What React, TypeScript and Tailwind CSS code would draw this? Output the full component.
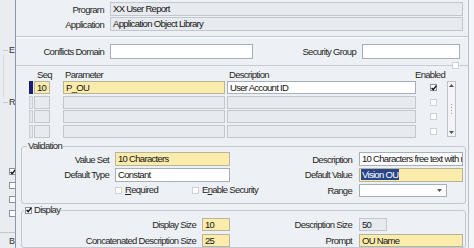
import clsx from "clsx";
import { ReactNode } from "react";

type Tone = "white" | "yellow" | "gray";

const toneClass: Record<Tone, string> = {
  white: "bg-white border-[#a7aebb]",
  yellow: "bg-[#fcecac] border-[#b9b39a]",
  gray: "bg-[#e7eaef] border-[#c1c6cf]",
};

function Field({
  children,
  tone = "white",
  className,
}: {
  children?: ReactNode;
  tone?: Tone;
  className?: string;
}) {
  return (
    <div
      className={clsx(
        "shrink-0 overflow-hidden whitespace-nowrap border px-[2px] leading-[11px] text-[#141414]",
        toneClass[tone],
        className
      )}
    >
      {children}
    </div>
  );
}

function Label({ children, className }: { children?: ReactNode; className?: string }) {
  return (
    <div className={clsx("shrink-0 whitespace-nowrap text-right leading-[13px] text-[#262626]", className)}>
      {children}
    </div>
  );
}

function Check({ checked, dim }: { checked?: boolean; dim?: boolean }) {
  return (
    <span
      className={clsx(
        "flex h-[7px] w-[7px] shrink-0 items-center justify-center border bg-white",
        dim ? "border-[#cdd1d8]" : "border-[#8d939d]"
      )}
    >
      {checked && (
        <svg viewBox="0 0 6 6" className="h-[6px] w-[6px] overflow-visible">
          <path d="M0.6 2.9 L2.2 4.6 L5.4 0.6" stroke="#111" strokeWidth="1.4" fill="none" />
        </svg>
      )}
    </span>
  );
}

function LeftStrip() {
  return (
    <div className="flex w-[15px] shrink-0 flex-col overflow-hidden bg-[#e9ecf1] text-[9px] text-[#333]">
      <div className="mt-[45px] flex h-[10px] items-center">
        <div className="ml-[3px] h-px w-[5px] shrink-0 bg-[#c3c8d0]" />
        <span className="ml-[1px] leading-[10px]">E</span>
      </div>
      <div className="ml-[3px] h-[42px] w-px bg-[#d6dae0]" />
      <div className="flex h-[10px] items-center">
        <div className="ml-[3px] h-px w-[5px] shrink-0 bg-[#c3c8d0]" />
        <span className="ml-[1px] leading-[10px]">R</span>
      </div>
      <div className="flex">
        <div className="ml-[3px] h-[125px] w-px bg-[#d6dae0]" />
        <div className="ml-[6px] mt-[61px] flex flex-col gap-[7px]">
          <Check checked />
          <Check />
          <Check />
          <Check />
        </div>
      </div>
      <div className="flex h-[16px] items-center border-t border-[#c3c8d0] pl-[9px]">
        <span className="leading-[10px]">B</span>
      </div>
    </div>
  );
}

function RowCells({ first }: { first?: boolean }) {
  return (
    <div className="flex h-[13px] items-stretch">
      <div
        className={clsx(
          "w-[4px] shrink-0",
          first ? "bg-[#1b1b78]" : "border border-[#c9cdd4] bg-[#e4e7ec]"
        )}
      />
      <Field tone={first ? "yellow" : "gray"} className="ml-[1px] w-[16px]">
        {first ? "10" : ""}
      </Field>
      <Field tone={first ? "yellow" : "gray"} className="ml-[13px] w-[162px]">
        {first ? "P_OU" : ""}
      </Field>
      <Field tone={first ? "white" : "gray"} className="ml-[2px] w-[189px]">
        {first ? "User Account ID" : ""}
      </Field>
      <div className="ml-[14px] flex items-center">
        <Check checked={first} dim={!first} />
      </div>
    </div>
  );
}

function Scrollbar() {
  return (
    <div className="ml-[10px] flex h-[56px] w-[9px] flex-col items-center justify-between border border-[#bcc1ca] bg-[#f3f4f7] py-[2px]">
      <svg viewBox="0 0 5 3" className="h-[3px] w-[5px]">
        <path d="M0 3 L2.5 0 L5 3 Z" fill="#555" />
      </svg>
      <div className="flex flex-col gap-[2px]">
        <span className="h-px w-px bg-[#9aa0aa]" />
        <span className="h-px w-px bg-[#9aa0aa]" />
        <span className="h-px w-px bg-[#9aa0aa]" />
        <span className="h-px w-px bg-[#9aa0aa]" />
      </div>
      <svg viewBox="0 0 5 3" className="h-[3px] w-[5px]">
        <path d="M0 0 L2.5 3 L5 0 Z" fill="#555" />
      </svg>
    </div>
  );
}

export default function App() {
  return (
    <div className="flex h-[248px] w-[474px] overflow-hidden bg-[#edf0f4] font-['Liberation_Sans',Arial,sans-serif] text-[9.5px] tracking-[-0.7px] text-[#262626]">
      <LeftStrip />
      <div className="w-px shrink-0 bg-[#8f98a6]" />

      <main className="flex w-[452px] shrink-0 flex-col">
        {/* Program / Application */}
        <div className="flex h-[37px] flex-col gap-[1px] pt-[2px]">
          <div className="flex h-[14px] items-center">
            <Label className="w-[88px]">Program</Label>
            <Field tone="gray" className="ml-[6px] h-[14px] w-[353px] leading-[12px]">
              XX User Report
            </Field>
          </div>
          <div className="flex h-[14px] items-center">
            <Label className="w-[88px]">Application</Label>
            <Field tone="gray" className="ml-[6px] h-[14px] w-[353px] leading-[12px]">
              Application Object Library
            </Field>
          </div>
        </div>
        <div className="border-t border-b border-t-[#c3c8d0] border-b-[#fafbfc]" />

        {/* Conflicts Domain / Security Group */}
        <div className="flex h-[24px] items-start pt-[6px]">
          <Label className="w-[88px] leading-[15px]">Conflicts Domain</Label>
          <Field className="ml-[6px] h-[15px] w-[143px]" />
          <Label className="w-[103px] leading-[15px]">Security Group</Label>
          <Field className="ml-[6px] h-[15px] w-[98px]" />
        </div>
        <div className="flex h-[7px] items-center">
          <div className="h-px flex-1 bg-[#c7ccd4]" />
          <Check dim />
          <div className="h-px w-[9px] bg-[#c7ccd4]" />
        </div>

        {/* Parameter block */}
        <div className="flex h-[12px] items-center pl-[18px] leading-[12px] text-[#262626]">
          <div className="w-[16px] shrink-0 pl-[3px]">Seq</div>
          <div className="ml-[13px] w-[162px] shrink-0 pl-[2px]">Parameter</div>
          <div className="ml-[2px] w-[188px] shrink-0 pl-[2px]">Description</div>
          <div className="whitespace-nowrap">Enabled</div>
        </div>
        <div className="flex pl-[13px]">
          <div className="flex flex-col gap-[1.5px]">
            <RowCells first />
            <RowCells />
            <RowCells />
            <RowCells />
          </div>
          <Scrollbar />
        </div>

        {/* Validation */}
        <fieldset className="mt-[2.5px] ml-[5px] mr-[2px] rounded-[3px] border border-[#c3c8d0] pb-[6px]">
          <legend className="ml-[5px] px-[1px] leading-[12px] text-[#262626]">Validation</legend>
          <div className="flex flex-col gap-[1.5px]">
            <div className="flex h-[14px] items-center">
              <Label className="w-[87px]">Value Set</Label>
              <Field tone="yellow" className="ml-[6px] h-[14px] w-[115px] leading-[12px]">
                10 Characters
              </Field>
              <Label className="w-[122px]">Description</Label>
              <Field className="ml-[7px] h-[14px] w-[104px] leading-[12px]">
                10 Characters free text with r
              </Field>
            </div>
            <div className="flex h-[14px] items-center">
              <Label className="w-[87px]">Default Type</Label>
              <Field className="ml-[6px] h-[14px] w-[115px] leading-[12px]">Constant</Field>
              <Label className="w-[122px]">Default Value</Label>
              <Field tone="yellow" className="ml-[7px] h-[14px] w-[104px] pl-[1px] leading-[12px]">
                <span className="bg-[#28468a] px-[1px] text-white">Vision OU</span>
              </Field>
            </div>
            <div className="flex h-[14px] items-center">
              <Label className="w-[87px]" />
              <div className="ml-[6px] flex w-[115px] shrink-0 items-center whitespace-nowrap text-[#262626]">
                <div className="flex w-[77px] shrink-0 items-center gap-[3px]">
                  <Check dim />
                  <span>
                    <span className="underline">R</span>equired
                  </span>
                </div>
                <div className="flex shrink-0 items-center gap-[3px]">
                  <Check dim />
                  <span>
                    E<span className="underline">n</span>able Security
                  </span>
                </div>
              </div>
              <Label className="w-[122px]">Range</Label>
              <Field className="relative ml-[7px] h-[13px] w-[88px]">
                <svg
                  viewBox="0 0 5 3"
                  className="absolute right-[4px] top-[4px] h-[3px] w-[5px]"
                >
                  <path d="M0 0 L2.5 3 L5 0 Z" fill="#555" />
                </svg>
              </Field>
            </div>
          </div>
        </fieldset>

        {/* Display */}
        <fieldset className="ml-[5px] mr-[2px] rounded-[3px] border border-[#c3c8d0] pt-[2px]">
          <legend className="ml-[2px] flex items-center gap-[2px] px-[1px] leading-[12px] text-[#262626]">
            <Check checked />
            <span>Display</span>
          </legend>
          <div className="flex flex-col gap-[3px]">
            <div className="flex h-[13px] items-center">
              <Label className="w-[174px]">Display Size</Label>
              <Field tone="yellow" className="ml-[6px] h-[13px] w-[28px]">10</Field>
              <Label className="w-[122px]">Description Size</Label>
              <Field tone="gray" className="ml-[7px] h-[13px] w-[28px] text-[#555]">50</Field>
            </div>
            <div className="flex h-[13px] items-center">
              <Label className="w-[174px]">Concatenated Description Size</Label>
              <Field tone="yellow" className="ml-[6px] h-[13px] w-[28px]">25</Field>
              <Label className="w-[122px]">Prompt</Label>
              <Field tone="yellow" className="ml-[7px] h-[13px] w-[104px]">OU Name</Field>
            </div>
          </div>
        </fieldset>
      </main>

      <div className="w-px shrink-0 bg-[#b9bfc9]" />
      <div className="flex-1 bg-[#f4f5f8]" />
    </div>
  );
}
